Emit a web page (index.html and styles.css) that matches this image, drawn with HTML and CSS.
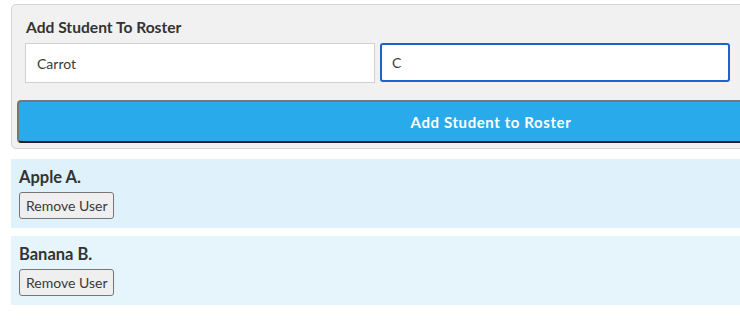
FILE: index.html
```html
<!DOCTYPE html>
<html lang="en">
<head>
  <meta charset="UTF-8" />
  <meta name="viewport" content="width=device-width, initial-scale=1.0"/>
  <title>Roster</title>
  <link rel="stylesheet" href="styles.css">
</head>
<body>

  <form class="add-form">
    <h3 class="add-title">Add Student To Roster</h3>
    <div class="add-fields">
      <input type="text" class="field" value="Carrot" />
      <input type="text" class="field field-focus" value="C" />
    </div>
    <button type="button" class="add-btn">Add Student to Roster</button>
  </form>

  <ul class="roster">
    <li class="student">
      <div class="student-name">Apple A.</div>
      <button type="button" class="remove-btn">Remove User</button>
    </li>
    <li class="student student-alt">
      <div class="student-name">Banana B.</div>
      <button type="button" class="remove-btn">Remove User</button>
    </li>
  </ul>

</body>
</html>
```

FILE: styles.css
```css
html, body {
  overflow: hidden;
}
body {
  margin: 0;
  padding: 4px 0 0 11px;
  width: 960px;
  font-family: Lato, "Liberation Sans", sans-serif;
  color: #333;
  background: #fff;
}
.add-form {
  background-color: #f1f1f1;
  border: 1px solid #d4d4d4;
  border-radius: 5px;
  padding: 0 5px 5px 5px;
}
.add-title {
  margin: 0;
  padding: 13px 0 0 9px;
  height: 25px;
  font-size: 15.6px;
  font-weight: 700;
  color: #333;
}
.add-fields {
  display: flex;
  gap: 5px;
  padding-left: 8px;
}
.field {
  box-sizing: border-box;
  width: 350px;
  height: 40px;
  padding: 0 11px;
  border: 1px solid #d0d0d0;
  background: #fff;
  font-family: Lato, "Liberation Sans", sans-serif;
  font-size: 14px;
  font-weight: 400;
  color: #3a3a3a;
  outline: none;
}
.field-focus {
  border: 2px solid #1a64d0;
  border-radius: 3px;
  padding: 0 10px;
  height: 39px;
}
.add-btn {
  display: block;
  width: 100%;
  height: 43px;
  margin-top: 17px;
  background-color: #29abeb;
  border: 2px solid #777;
  border-bottom-color: #222;
  border-right-color: #222;
  border-radius: 4px;
  color: #fff;
  font-family: Lato, "Liberation Sans", sans-serif;
  font-size: 15px;
  font-weight: 700;
  letter-spacing: 0.6px;
}
.roster {
  list-style: none;
  margin: 10px 0 0 0;
  padding: 0;
}
.student {
  background-color: #dff1fa;
  padding: 8px 9px 9px 8px;
  margin-bottom: 8px;
}
.student-alt {
  background-color: #e6f4fb;
}
.student-name {
  font-size: 16.5px;
  font-weight: 700;
  color: #333;
  height: 25px;
}
.remove-btn {
  height: 27px;
  padding: 0 6px;
  background: #efefef;
  border: 1px solid #767676;
  border-radius: 3px;
  font-family: Lato, "Liberation Sans", sans-serif;
  font-size: 14px;
  font-weight: 400;
  color: #3a3a3a;
}
```
